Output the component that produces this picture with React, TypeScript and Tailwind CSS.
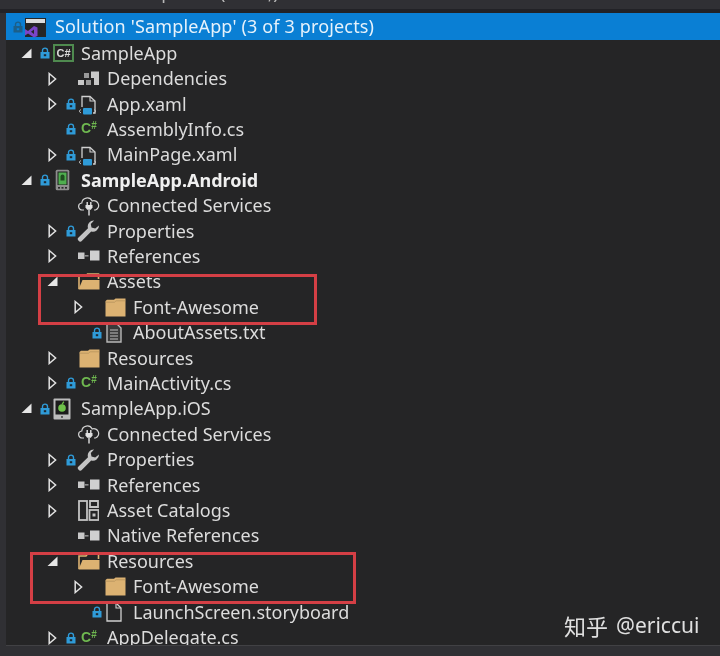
import React from 'react'

type Kind =
  | 'csproj' | 'deps' | 'xaml' | 'cs' | 'android' | 'cloud' | 'wrench' | 'refs'
  | 'folderOpen' | 'folder' | 'txt' | 'ios' | 'catalog' | 'blank'

interface Item {
  label: string
  depth: 0 | 1 | 2
  arrow?: 'open' | 'closed'
  lock?: boolean
  icon: Kind
  bold?: boolean
}

const ITEMS: Item[] = [
  { label: 'SampleApp', depth: 0, arrow: 'open', lock: true, icon: 'csproj' },
  { label: 'Dependencies', depth: 1, arrow: 'closed', icon: 'deps' },
  { label: 'App.xaml', depth: 1, arrow: 'closed', lock: true, icon: 'xaml' },
  { label: 'AssemblyInfo.cs', depth: 1, lock: true, icon: 'cs' },
  { label: 'MainPage.xaml', depth: 1, arrow: 'closed', lock: true, icon: 'xaml' },
  { label: 'SampleApp.Android', depth: 0, arrow: 'open', lock: true, icon: 'android', bold: true },
  { label: 'Connected Services', depth: 1, icon: 'cloud' },
  { label: 'Properties', depth: 1, arrow: 'closed', lock: true, icon: 'wrench' },
  { label: 'References', depth: 1, arrow: 'closed', icon: 'refs' },
  { label: 'Assets', depth: 1, arrow: 'open', icon: 'folderOpen' },
  { label: 'Font-Awesome', depth: 2, arrow: 'closed', icon: 'folder' },
  { label: 'AboutAssets.txt', depth: 2, lock: true, icon: 'txt' },
  { label: 'Resources', depth: 1, arrow: 'closed', icon: 'folder' },
  { label: 'MainActivity.cs', depth: 1, arrow: 'closed', lock: true, icon: 'cs' },
  { label: 'SampleApp.iOS', depth: 0, arrow: 'open', lock: true, icon: 'ios' },
  { label: 'Connected Services', depth: 1, icon: 'cloud' },
  { label: 'Properties', depth: 1, arrow: 'closed', lock: true, icon: 'wrench' },
  { label: 'References', depth: 1, arrow: 'closed', icon: 'refs' },
  { label: 'Asset Catalogs', depth: 1, arrow: 'closed', icon: 'catalog' },
  { label: 'Native References', depth: 1, icon: 'refs' },
  { label: 'Resources', depth: 1, arrow: 'open', icon: 'folderOpen' },
  { label: 'Font-Awesome', depth: 2, arrow: 'closed', icon: 'folder' },
  { label: 'LaunchScreen.storyboard', depth: 2, lock: true, icon: 'blank' },
  { label: 'AppDelegate.cs', depth: 1, arrow: 'closed', lock: true, icon: 'cs' },
]

// the tree panel itself starts at x=6
const DEPTH_PADDING = ['pl-[15px]', 'pl-[41px]', 'pl-[67px]']

const Lock = ({ body = '#2f9bd8', hole = '#1d2a33' }: { body?: string; hole?: string }) => (
  <svg width="10" height="12" viewBox="0 0 10 12">
    <path d="M2.5 6V3.6a2.5 2.5 0 0 1 5 0V6" fill="none" stroke={body} strokeWidth="1.4" />
    <rect x="0.5" y="5" width="9" height="6.5" fill={body} />
    <rect x="3.8" y="7.2" width="2.4" height="2" fill={hole} />
  </svg>
)

const Arrow = ({ dir }: { dir: 'open' | 'closed' }) =>
  dir === 'open' ? (
    <svg width="11" height="11" viewBox="0 0 11 11">
      <path d="M10.5 0.5V10H0.5Z" fill="#e6e6e6" />
    </svg>
  ) : (
    <svg className="ml-px" width="9" height="14" viewBox="0 0 9 14">
      <path d="M1.2 1.5L7.6 7L1.2 12.5Z" fill="none" stroke="#e2e2e2" strokeWidth="1.5" />
    </svg>
  )

const Icon = ({ kind }: { kind: Kind }) => {
  switch (kind) {
    case 'csproj':
      return (
        <div className="ml-px w-[21px] h-[18px] border-2 border-[#4f8a4f] bg-[#252526] flex items-center justify-center">
          <span className="text-[11px] leading-none font-bold text-[#dcdcdc] font-['Liberation_Sans',sans-serif]">C#</span>
        </div>
      )
    case 'cs':
      return (
        <span className="ml-[3px] -mt-[2px] flex items-start text-[14px] leading-none font-bold text-[#6fb850] font-['Liberation_Sans',sans-serif]">
          C<span className="text-[10px] leading-none">#</span>
        </span>
      )
    case 'deps':
      return (
        <svg width="22" height="16" viewBox="0 0 22 16">
          <rect x="0" y="9" width="6" height="5" fill="#c8c8c8" />
          <rect x="6" y="2" width="5" height="5" fill="#9a9a9a" />
          <rect x="8" y="9" width="5" height="5" fill="#9a9a9a" />
          <path d="M13 0.5H21V14H16V7H13Z" fill="#c8c8c8" />
        </svg>
      )
    case 'xaml':
      return (
        <svg width="20" height="22" viewBox="0 0 20 22">
          <path d="M4 14V3.5H12L17 8V20H15" fill="none" stroke="#d0d0d0" strokeWidth="1.3" />
          <path d="M12 3.5V8H17" fill="none" stroke="#d0d0d0" strokeWidth="1.1" />
          <rect x="5" y="15" width="9" height="6.5" rx="1" fill="#2f9bd8" />
          <path d="M3 16.5L1 18.2L3 20M16 16.5L18 18.2L16 20" fill="none" stroke="#c8c8c8" strokeWidth="0.9" />
        </svg>
      )
    case 'android':
      return (
        <svg className="ml-[3px]" width="15" height="22" viewBox="0 0 15 22">
          <rect x="0.7" y="0.7" width="13.6" height="20.6" rx="1.5" fill="#8e8e8e" />
          <rect x="2.5" y="2.5" width="10" height="13.5" fill="#1e1e1e" />
          <rect x="3.5" y="3.5" width="8" height="12" fill="#4fae4f" />
          <path d="M5.5 7.5a2 2 0 0 1 4 0v4h-4Z" fill="#1f4d1f" />
          <rect x="3" y="18" width="2" height="1.6" fill="#2a2a2a" />
          <rect x="6.5" y="18" width="2" height="1.6" fill="#2a2a2a" />
          <rect x="10" y="18" width="2" height="1.6" fill="#2a2a2a" />
        </svg>
      )
    case 'ios':
      return (
        <svg className="ml-px" width="18" height="22" viewBox="0 0 18 22">
          <rect x="0.5" y="0.5" width="17" height="21" rx="1" fill="#bcbcbc" />
          <rect x="2.5" y="2.5" width="13" height="14" fill="#1c1c1c" />
          <circle cx="9" cy="10" r="3.8" fill="#6fc24a" />
          <path d="M9 6.5L10.8 3.6" stroke="#6fc24a" strokeWidth="1.3" />
          <rect x="8" y="18.2" width="2" height="1.5" fill="#444444" />
        </svg>
      )
    case 'cloud':
      return (
        <svg width="22" height="20" viewBox="0 0 22 20">
          <path
            d="M6 14H4.5A3.5 3.5 0 0 1 3.8 7a5.5 5.5 0 0 1 10.4-2A4.5 4.5 0 0 1 17.5 14H16"
            fill="none"
            stroke="#d2d2d2"
            strokeWidth="1.2"
          />
          <path d="M7.5 9H14.5V11.5L12.8 13.8H9.2L7.5 11.5Z" fill="#e0e0e0" />
          <path d="M9.2 6V9M12.8 6V9M11 13.8V19.5" stroke="#e0e0e0" strokeWidth="1.4" />
        </svg>
      )
    case 'wrench':
      return (
        <svg className="-ml-px" width="23" height="22" viewBox="0 0 22 22">
          <path
            d="M21.5 5.5A6 6 0 0 1 13.7 11.4L4.5 20.8A2.3 2.3 0 0 1 1 17.4L10.5 8.2A6 6 0 0 1 16.6 0.5L13.3 4L14 7.6L17.7 8.6Z"
            fill="#c4c4c4"
          />
        </svg>
      )
    case 'refs':
      return (
        <svg width="22" height="12" viewBox="0 0 22 12">
          <rect x="0" y="2.5" width="6.5" height="6.5" fill="#c8c8c8" />
          <rect x="6.5" y="5" width="4" height="1.6" fill="#8e8e8e" />
          <rect x="12" y="0.5" width="9.5" height="10" fill="#d0d0d0" />
        </svg>
      )
    case 'folder':
      return (
        <svg className="ml-px" width="21" height="19" viewBox="0 0 21 19">
          <path d="M0.5 3L2 1.8H9L10.5 0.5H20.5V18.5H0.5Z" fill="#dcb272" />
          <path d="M0.5 4.2H9.5L11 2.8H20.5" fill="none" stroke="#a98a55" strokeWidth="0.6" />
        </svg>
      )
    case 'folderOpen':
      return (
        <svg width="22" height="17" viewBox="0 0 22 17">
          <path d="M1 16V3H8L9.5 1H20.5V6" fill="none" stroke="#dcb272" strokeWidth="1.6" />
          <path d="M0.5 16.5L4.5 7H21.5V16.5Z" fill="#dcb272" />
        </svg>
      )
    case 'txt':
      return (
        <svg className="ml-[2px]" width="16" height="20" viewBox="0 0 16 20">
          <path d="M1 1H11L15 5V19H1Z" fill="#3a3a3a" stroke="#b8b8b8" strokeWidth="1.4" />
          <path d="M4 7H12M4 10H12M4 13H12M4 16H12" stroke="#bdbdbd" strokeWidth="1.2" />
        </svg>
      )
    case 'catalog':
      return (
        <svg width="21" height="21" viewBox="0 0 21 21">
          <rect x="1" y="1" width="8" height="19" fill="none" stroke="#c4c4c4" strokeWidth="1.8" />
          <path d="M12 1H20V7H12Z" fill="none" stroke="#c4c4c4" strokeWidth="1.8" />
          <rect x="11.5" y="10" width="9" height="10" fill="none" stroke="#c4c4c4" strokeWidth="1.8" />
          <rect x="14.5" y="13.5" width="3" height="3" fill="#c4c4c4" />
        </svg>
      )
    case 'blank':
      return (
        <svg className="ml-[2px]" width="16" height="20" viewBox="0 0 16 20">
          <path d="M1 1H10L15 6V19H1Z" fill="none" stroke="#d0d0d0" strokeWidth="1.3" />
          <path d="M10 1V6H15" fill="none" stroke="#d0d0d0" strokeWidth="1.1" />
        </svg>
      )
    default:
      return null
  }
}

const Row = ({ item }: { item: Item }) => (
  <div className={`h-[25.42px] flex items-center ${DEPTH_PADDING[item.depth]}`}>
    <div className="w-[19px] shrink-0 flex items-center">{item.arrow && <Arrow dir={item.arrow} />}</div>
    <div className="w-[12px] shrink-0 flex items-center">{item.lock && <Lock />}</div>
    <div className="w-[29px] shrink-0 flex items-center">
      <Icon kind={item.icon} />
    </div>
    <span className={`whitespace-nowrap text-[18px] ${item.bold ? 'font-bold text-[#f0f0f0]' : 'text-[#dcdcdc]'}`}>
      {item.label}
    </span>
  </div>
)

export default function App() {
  return (
    <div className="relative w-[720px] h-[656px] overflow-hidden bg-[#303034] blur-[0.35px] font-['Noto_Sans',sans-serif]">
      {/* toolbar above the tree, only the descenders of its text are left */}
      <div className="h-[13px] overflow-hidden border-b-[4px] border-[#222226] pl-[63px]">
        <div className="text-[18px] leading-[18px] -mt-[17px] tracking-[0.4px] text-[#b8b8b8] whitespace-nowrap">Solution Explorer (Ctrl+;)</div>
      </div>

      <div className="ml-[6px] h-[633px] overflow-hidden bg-[#252526] border-b border-[#414144]">
        <div className="h-[27px] bg-[#0a7fd4] flex items-center pl-[7px]">
          <div className="w-[11px] shrink-0 flex items-center">
            <Lock body="#1c5f88" hole="#0a7fd4" />
          </div>
          <div className="w-[31px] shrink-0 flex items-center">
            <svg width="23" height="22" viewBox="0 0 23 22">
              <rect x="1" y="2" width="21" height="19" fill="#262626" />
              <rect x="2" y="3" width="19" height="4" fill="#dcdcdc" />
              <path d="M1 13L4 15L10 10L13.5 11.5V20L10 21.5L4 17.5L1 19.5Z" fill="#7b45c8" />
              <path d="M7 15.7L10 13.5V18Z" fill="#262626" />
            </svg>
          </div>
          <span className="whitespace-nowrap text-[18px] tracking-[0.15px] text-[#e6f2fb]">Solution 'SampleApp' (3 of 3 projects)</span>
        </div>
        <div className="pt-[0.5px]">
          {ITEMS.map((item, i) => (
            <Row key={i} item={item} />
          ))}
        </div>
      </div>

      {/* red annotation boxes drawn over the tree */}
      <div className="absolute left-[38px] top-[274px] w-[279px] h-[51px] border-[3px] border-[#d43f45]" />
      <div className="absolute left-[30px] top-[552px] w-[326px] h-[52px] border-[3px] border-[#d43f45]" />

      {/* watermark */}
      <div className="absolute left-[564px] top-[611px] flex items-center gap-[8px] leading-[28px] text-[#e0e0e0] whitespace-nowrap">
        <span className="text-[22px] font-['Noto_Sans_CJK_SC',sans-serif]">知乎</span>
        <span className="text-[21px]">@ericcui</span>
      </div>
    </div>
  )
}
